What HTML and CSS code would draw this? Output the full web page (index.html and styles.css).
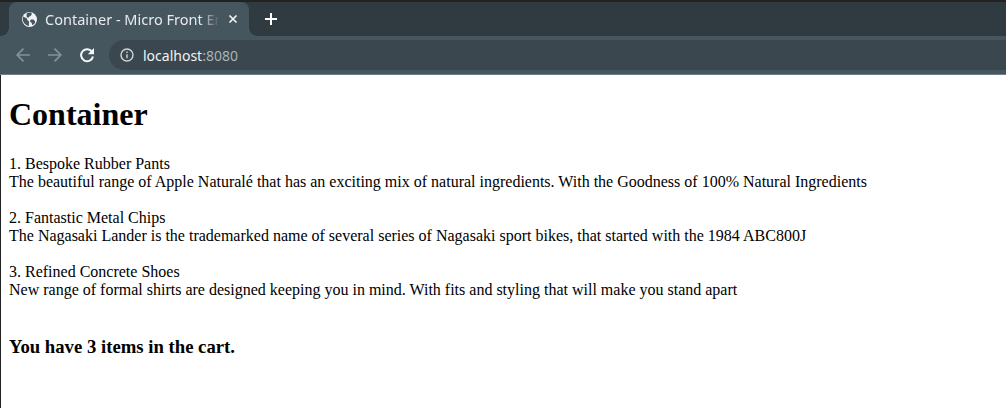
FILE: index.html
```html
<!DOCTYPE html>
<html lang="en">
<head>
<meta charset="utf-8">
<title>Container - Micro Front End</title>
<link rel="stylesheet" href="styles.css">
</head>
<body>
<div class="window">
  <header class="chrome">
    <div class="tabstrip">
      <div class="tab">
        <svg class="globe" viewBox="0 0 16 16" width="15" height="15"><circle cx="8" cy="8" r="8" fill="#f1f3f4"/><path d="M1.200 4.800 5.400 6.800l.2 1.800 1.800 1.300v4.900C4.800 14.400 2.400 12.600 1.300 10c-.6-1.700-.6-3.600-.1-5.200zM10.200.8v2.400L8 4.800 6.400 6.300 4.800 4.800 5 1.400C6.600.6 8.500.4 10.200.8zM9.400 8h2.700l1.600 1.600.4 1.700c-.7 1.200-1.800 2.200-3 2.800l-.9-2.600-1.800-1.400z" fill="#45565f"/></svg>
        <span class="tab-title">Container - Micro Front End</span>
        <svg class="close" viewBox="0 0 10 10" width="10" height="10"><path d="M1.500 1.500l7 7M8.500 1.500l-7 7" stroke="#f1f3f4" stroke-width="1.700" fill="none"/></svg>
      </div>
      <svg class="newtab" viewBox="0 0 12 12" width="12" height="12"><path d="M6 0v12M0 6h12" stroke="#fff" stroke-width="2" fill="none"/></svg>
    </div>
    <div class="toolbar">
      <svg class="nav" viewBox="0 0 16 16" width="16" height="16"><path d="M15 8H2.500M8.500 1.700 2.200 8l6.300 6.300" stroke="#84929a" stroke-width="1.700" fill="none"/></svg>
      <svg class="nav" viewBox="0 0 16 16" width="16" height="16"><path d="M1 8h12.500M7.500 1.700 13.800 8l-6.300 6.300" stroke="#84929a" stroke-width="1.700" fill="none"/></svg>
      <svg class="nav" viewBox="0 0 16 16" width="16" height="16"><path d="M13.200 5A6 6 0 1 0 14 9.500" stroke="#f6f7f8" stroke-width="2" fill="none"/><path d="M15 1v6.200H8.800z" fill="#f6f7f8"/></svg>
      <div class="omnibox">
        <svg class="info" viewBox="0 0 14 14" width="14" height="14"><circle cx="7" cy="7" r="6" stroke="#cfd3d6" stroke-width="1.400" fill="none"/><path d="M7 6.200v4.100M7 3.600v1.500" stroke="#cfd3d6" stroke-width="1.400" fill="none"/></svg>
        <span class="host">localhost<span class="port">:8080</span></span>
      </div>
    </div>
  </header>
  <main class="page">
    <h1>Container</h1>
    <div class="products">
      <div class="product">1. Bespoke Rubber Pants<br>The beautiful range of Apple Naturalé that has an exciting mix of natural ingredients. With the Goodness of 100% Natural Ingredients</div>
      <div class="product">2. Fantastic Metal Chips<br>The Nagasaki Lander is the trademarked name of several series of Nagasaki sport bikes, that started with the 1984 ABC800J</div>
      <div class="product">3. Refined Concrete Shoes<br>New range of formal shirts are designed keeping you in mind. With fits and styling that will make you stand apart</div>
    </div>
    <h3>You have 3 items in the cart.</h3>
  </main>
</div>
</body>
</html>
```
FILE: styles.css
```css
* { box-sizing: border-box; }
html, body { margin: 0; height: 100%; overflow: hidden; background: #fff; }
.window { height: 408px; border-left: 1px solid #222; }
.chrome { font-family: "Noto Sans", "Open Sans", sans-serif; margin-left: -1px; }
.tabstrip { height: 36px; border-top: 2px solid #222222; background: #2f3b41; display: flex; align-items: flex-end; padding-left: 9px; }
.tab { position: relative; width: 240px; height: 34px; background: #45565f; border-radius: 8px 8px 0 0; display: flex; align-items: center; padding: 0 11px 0 13px; color: #e8eaed; font-size: 14.5px; }
.tab::before, .tab::after { content: ""; position: absolute; bottom: 0; width: 8px; height: 8px; }
.tab::before { left: -8px; background: radial-gradient(circle at 0 0, #2f3b41 7.500px, #45565f 8px); }
.tab::after { right: -8px; background: radial-gradient(circle at 100% 0, #2f3b41 7.500px, #45565f 8px); }
.globe { flex: none; margin-right: 8px; }
.tab-title { flex: 1; overflow: hidden; white-space: nowrap; -webkit-mask-image: linear-gradient(to right, #000 88%, transparent); mask-image: linear-gradient(to right, #000 88%, transparent); }
.close { flex: none; margin-left: 8px; }
.newtab { margin: 0 0 11px 16px; }
.toolbar { height: 39px; background: #45565f; border-bottom: 1px solid #6f7e86; display: flex; align-items: center; padding: 0 0 0 15px; gap: 16px; }
.omnibox { flex: 1; height: 30px; margin-left: -2px; background: #3a474e; border-radius: 15px 0 0 15px; display: flex; align-items: center; padding-left: 11px; font-size: 14px; color: #f1f3f4; }
.info { margin-right: 9px; }
.port { color: #a9b2b6; }
.page { padding: 0 8px; font-family: "Liberation Serif", serif; font-size: 16px; color: #000; }
h1 { font-size: 32px; margin: 21.44px 0; }
h3 { font-size: 18.72px; margin: 18.72px 0; }
.products { padding-bottom: 18px; }
.product { margin-bottom: 18px; white-space: nowrap; }
.product:last-child { margin-bottom: 0; }
```
